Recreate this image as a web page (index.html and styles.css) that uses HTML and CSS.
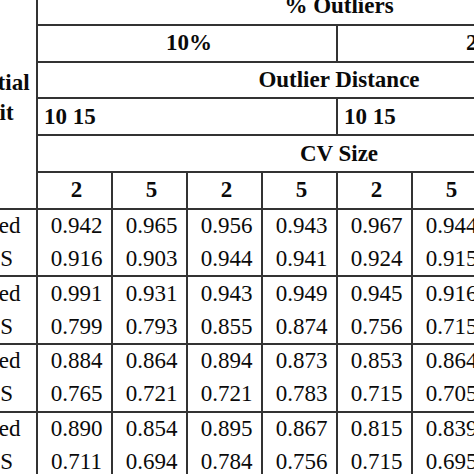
FILE: index.html
```html
<!DOCTYPE html>
<html>
<head>
<meta charset="utf-8">
<link rel="stylesheet" href="styles.css">
</head>
<body>
<table class="tbl">
  <colgroup>
    <col class="c0"><col class="c"><col class="c"><col class="c"><col class="c"><col class="c"><col class="c"><col class="c"><col class="c">
  </colgroup>
  <thead>
    <tr class="hrow">
      <th class="lead" rowspan="6">Initial<br>Fit</th>
      <th colspan="8">% Outliers</th>
    </tr>
    <tr class="hrow">
      <th colspan="4">10%</th>
      <th colspan="4">20%</th>
    </tr>
    <tr class="hrow">
      <th colspan="8">Outlier Distance</th>
    </tr>
    <tr class="hrow">
      <th colspan="4" class="left">10 15</th>
      <th colspan="4" class="left">10 15</th>
    </tr>
    <tr class="hrow">
      <th colspan="8">CV Size</th>
    </tr>
    <tr class="hrow">
      <th>2</th><th>5</th><th>2</th><th>5</th><th>2</th><th>5</th><th>2</th><th>5</th>
    </tr>
  </thead>
  <tbody>
    <tr class="r1"><td class="lab">Med</td><td>0.942</td><td>0.965</td><td>0.956</td><td>0.943</td><td>0.967</td><td>0.944</td><td>0.951</td><td>0.938</td></tr>
    <tr class="r2"><td class="lab">LS</td><td>0.916</td><td>0.903</td><td>0.944</td><td>0.941</td><td>0.924</td><td>0.915</td><td>0.930</td><td>0.926</td></tr>
  </tbody>
  <tbody>
    <tr class="r1"><td class="lab">Med</td><td>0.991</td><td>0.931</td><td>0.943</td><td>0.949</td><td>0.945</td><td>0.916</td><td>0.927</td><td>0.912</td></tr>
    <tr class="r2"><td class="lab">LS</td><td>0.799</td><td>0.793</td><td>0.855</td><td>0.874</td><td>0.756</td><td>0.715</td><td>0.802</td><td>0.789</td></tr>
  </tbody>
  <tbody>
    <tr class="r1"><td class="lab">Med</td><td>0.884</td><td>0.864</td><td>0.894</td><td>0.873</td><td>0.853</td><td>0.864</td><td>0.871</td><td>0.859</td></tr>
    <tr class="r2"><td class="lab">LS</td><td>0.765</td><td>0.721</td><td>0.721</td><td>0.783</td><td>0.715</td><td>0.705</td><td>0.742</td><td>0.731</td></tr>
  </tbody>
  <tbody>
    <tr class="r1"><td class="lab">Med</td><td>0.890</td><td>0.854</td><td>0.895</td><td>0.867</td><td>0.815</td><td>0.839</td><td>0.846</td><td>0.828</td></tr>
    <tr class="r2"><td class="lab">LS</td><td>0.711</td><td>0.694</td><td>0.784</td><td>0.756</td><td>0.715</td><td>0.695</td><td>0.733</td><td>0.718</td></tr>
  </tbody>
</table>
</body>
</html>
```
FILE: styles.css
```css
html, body {
  margin: 0;
  padding: 0;
  background: #fff;
  overflow: hidden;
}

.tbl {
  border-collapse: collapse;
  table-layout: fixed;
  width: 677px;
  margin: -13px 0 0 -39px;
  font-family: "Liberation Serif", "Times New Roman", serif;
  font-size: 23px;
  color: #0a0a0a;
}

.c0 { width: 75px; }
.c { width: 75px; }

.tbl th,
.tbl td {
  border: 2px solid #333;
  padding: 0 0 0 4px;
  text-align: center;
  vertical-align: middle;
  white-space: nowrap;
  line-height: 26px;
}

.tbl th {
  font-weight: bold;
}

.tbl th.left {
  text-align: left;
  padding-left: 6px;
}

.tbl th.lead {
  line-height: 30px;
  padding: 0;
}

.hrow { height: 36.8px; }

.r1, .r2 { height: 33.8px; }

.r1 td { border-bottom: none; }
.r2 td { border-top: none; }

.tbl td.lab {
  padding: 0;
}
```
